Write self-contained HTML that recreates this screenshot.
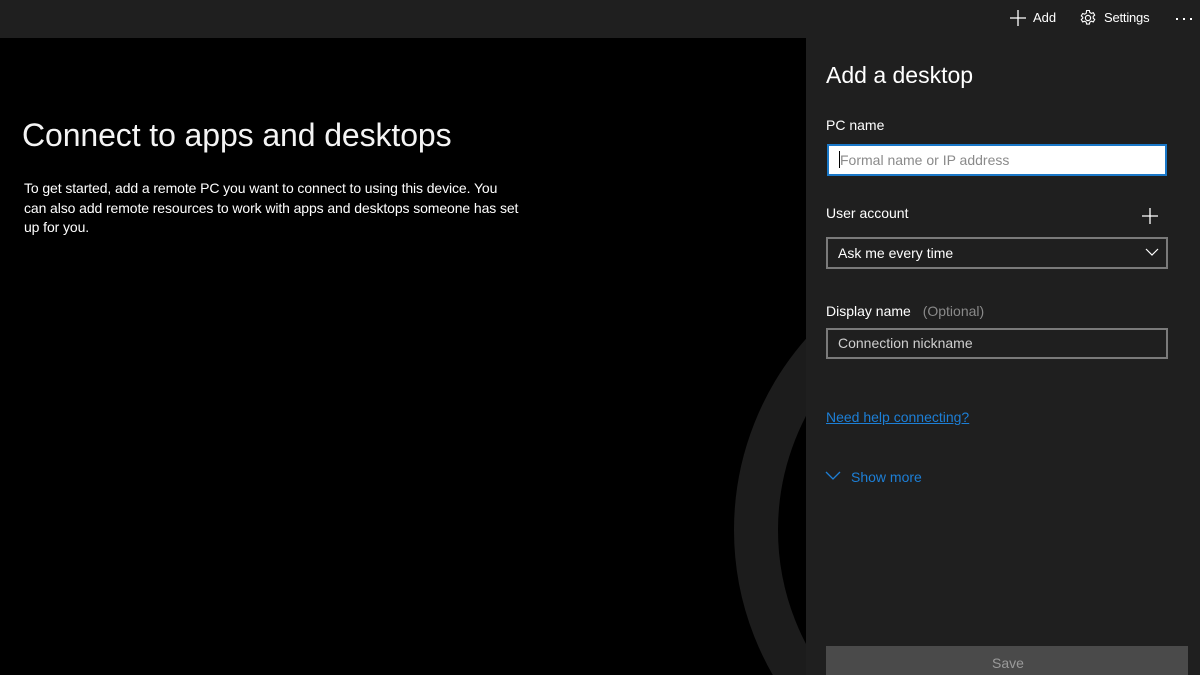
<!DOCTYPE html>
<html><head><meta charset="utf-8"><style>
*{margin:0;padding:0;box-sizing:border-box}
html,body{width:1200px;height:675px;overflow:hidden}
body{background:#000;font-family:"Liberation Sans",sans-serif;color:#fff}
.wrap{position:relative;width:1200px;height:675px;overflow:hidden}
.top{position:absolute;left:0;top:0;width:1200px;height:38px;background:#1f1f1f}
.panel{position:absolute;left:806px;top:38px;width:394px;height:637px;background:#1f1f1f}
.t{position:absolute;white-space:nowrap}
.box{position:absolute;border:2px solid #7a7a7a}
.dot{position:absolute;top:18px;width:2px;height:2px;background:#fff}
</style></head><body><div class="wrap">
<svg style="position:absolute;left:0;top:0" width="1200" height="675"><circle cx="1024" cy="530" r="268" fill="none" stroke="#1c1c1c" stroke-width="44"/></svg>
<div class="top"></div>
<svg style="position:absolute;left:1009px;top:9px" width="18" height="18"><path d="M9 1V17M1 9H17" stroke="#fff" stroke-width="1.3"/></svg>
<div class="t" style="left:1033px;top:10px;font-size:13px">Add</div>
<svg style="position:absolute;left:1079px;top:9px" width="18" height="18" viewBox="0 0 18 18"><circle cx="9" cy="9" r="2.6" fill="none" stroke="#fff" stroke-width="1.2"/><path d="M7.6 1.5h2.8l.4 2 1.6.9 1.9-.7 1.4 2.4-1.5 1.3v1.8l1.5 1.3-1.4 2.4-1.9-.7-1.6.9-.4 2H7.6l-.4-2-1.6-.9-1.9.7-1.4-2.4 1.5-1.3V8.2L2.3 6.9l1.4-2.4 1.9.7 1.6-.9z" fill="none" stroke="#fff" stroke-width="1.1"/></svg>
<div class="t" style="left:1104px;top:10px;font-size:13px;letter-spacing:-0.2px">Settings</div>
<div class="dot" style="left:1176px"></div><div class="dot" style="left:1183px"></div><div class="dot" style="left:1190px"></div>
<div class="t" style="left:22px;top:117px;font-size:32px;font-weight:300;color:#f4f4f4;letter-spacing:-0.1px">Connect to apps and desktops</div>
<div class="t" style="left:24px;top:179px;font-size:14px;line-height:19.5px;letter-spacing:-0.1px">To get started, add a remote PC you want to connect to using this device. You<br>can also add remote resources to work with apps and desktops someone has set<br>up for you.</div>
<div class="panel"></div>
<div class="t" style="left:826px;top:62px;font-size:23px">Add a desktop</div>
<div class="t" style="left:826px;top:117px;font-size:14px">PC name</div>
<div class="box" style="left:827px;top:144px;width:340px;height:32px;background:#fff;border-color:#1a78c8"></div>
<div style="position:absolute;left:839px;top:151px;width:1px;height:17px;background:#000"></div>
<div class="t" style="left:840px;top:152px;font-size:14px;color:#8a8a8a">Formal name or IP address</div>
<div class="t" style="left:826px;top:205px;font-size:14px">User account</div>
<svg style="position:absolute;left:1142px;top:208px" width="16" height="16"><path d="M8 0V16M0 8H16" stroke="#fff" stroke-width="1.3"/></svg>
<div class="box" style="left:826px;top:237px;width:342px;height:32px"></div>
<div class="t" style="left:838px;top:245px;font-size:14px">Ask me every time</div>
<svg style="position:absolute;left:1145px;top:248px" width="14" height="9"><path d="M1 1L7 7L13 1" stroke="#fff" stroke-width="1.2" fill="none"/></svg>
<div class="t" style="left:826px;top:303px;font-size:14px">Display name <span style="color:#8a8a8a;margin-left:8px">(Optional)</span></div>
<div class="box" style="left:826px;top:328px;width:342px;height:31px"></div>
<div class="t" style="left:838px;top:335px;font-size:14px;color:#cfcfcf">Connection nickname</div>
<div class="t" style="left:826px;top:409px;font-size:14px;color:#1d7fd6;text-decoration:underline">Need help connecting?</div>
<svg style="position:absolute;left:825px;top:471px" width="16" height="10"><path d="M1 1L8 8L15 1" stroke="#1d7fd6" stroke-width="1.3" fill="none"/></svg>
<div class="t" style="left:851px;top:469px;font-size:14px;color:#1d7fd6">Show more</div>
<div style="position:absolute;left:826px;top:646px;width:362px;height:29px;background:#4a4a4a"></div>
<div class="t" style="left:992px;top:655px;font-size:14px;color:#9a9a9a">Save</div>
</div></body></html>
